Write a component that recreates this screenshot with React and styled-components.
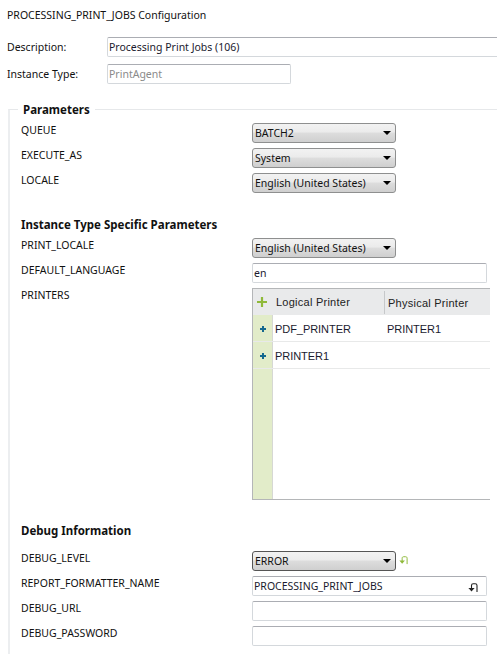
import React from 'react';
import styled, { createGlobalStyle } from 'styled-components';

const GlobalStyle = createGlobalStyle`
  html, body {
    margin: 0;
    padding: 0;
    background: #fff;
  }
`

const Page = styled.div`
  width: 497px;
  height: 654px;
  overflow: hidden;
  background: #fff;
  color: #111;
  font-family: "Noto Sans", "Liberation Sans", sans-serif;
  font-size: 10.5px;
`

const Title = styled.div`
  height: 20px;
  line-height: 20px;
  padding: 5px 0 0 7px;
  margin-bottom: 12px;
`

const TopRow = styled.div`
  display: grid;
  grid-template-columns: 100px ${props => props.$inputWidth}px;
  align-items: center;
  padding-left: 7px;
  height: 20px;
  margin-bottom: 7px;
`

const TextBox = styled.div`
  box-sizing: border-box;
  height: 20px;
  line-height: 18px;
  padding: 0 1px;
  width: ${props => props.$width}px;
  border: 1px solid #d4d8dc;
  border-top-color: #abadb3;
  border-radius: 2px;
  background: #fff;
  color: ${props => props.$muted ? '#8a8a8a' : '#1a1a2e'};
  white-space: nowrap;
  display: flex;
  justify-content: space-between;
  align-items: center;
`

const Fieldset = styled.div`
  position: relative;
  box-sizing: border-box;
  width: 520px;
  height: 600px;
  margin: 25px 0 0 8px;
  padding: 13px 0 0 11px;
  border-top: 1px solid #e6e8ea;
  border-left: 2px solid #eceef0;
`

const Legend = styled.div`
  position: absolute;
  top: -7px;
  left: 8px;
  padding: 0 5px;
  background: #fff;
  line-height: 14px;
  font-size: 11.5px;
  font-weight: 700;
`

const Heading = styled.div`
  height: 14px;
  line-height: 14px;
  font-size: 11.5px;
  font-weight: 700;
  margin-top: ${props => props.$top}px;
  margin-bottom: ${props => props.$bottom}px;
`

const Row = styled.div`
  display: grid;
  grid-template-columns: 231px 1fr;
  margin-bottom: 5px;
  min-height: 20px;
`

const Label = styled.div`
  line-height: 14px;
`

const Control = styled.div`
  display: flex;
  align-items: flex-start;
`

const SelectBox = styled.div`
  box-sizing: border-box;
  width: 144px;
  height: 20px;
  padding: 0 4px 0 2px;
  display: flex;
  justify-content: space-between;
  align-items: center;
  border: 1px solid ${props => props.$focused ? '#555' : '#8e8f8f'};
  border-radius: 3px;
  background: linear-gradient(#f2f2f2 0%, #ebebeb 45%, #dddddd 50%, #cfcfcf 100%);
  color: #111;
`

const Arrow = styled.span`
  width: 0;
  height: 0;
  border-left: 4px solid transparent;
  border-right: 4px solid transparent;
  border-top: 4px solid #000;
`

const GreenRevert = styled.span`
  margin: 5px 0 0 3px;
`

const InnerRevert = styled.span`
  margin-right: 7px;
  margin-top: 3px;
`

const Table = styled.div`
  box-sizing: border-box;
  width: 238px;
  height: 212px;
  display: flex;
  flex-direction: column;
  border: solid #b4b6b8;
  border-width: 1px 0 1px 1px;
  font-family: "Liberation Sans", Arial, sans-serif;
  font-size: 11px;
`

const HeaderRow = styled.div`
  display: grid;
  grid-template-columns: 19px 112px 1fr;
  height: 26px;
  flex: none;
  background: #e9eaeb;
  letter-spacing: 0.25px;
  color: #222;
`

const HeaderCell = styled.div`
  display: flex;
  align-items: center;
  padding-left: ${props => props.$pad}px;
`

const Divider = styled.div`
  display: flex;
  align-items: center;
  border-left: 1px solid #c6c8ca;
  height: 23px;
  padding-left: 3px;
  margin-top: 1px;
  white-space: nowrap;
`

const Body = styled.div`
  flex: 1;
  background: linear-gradient(90deg, #e2ecc9 0, #e2ecc9 19px, #d6d8d4 19px, #d6d8d4 20px, #fff 20px);
`

const DataRow = styled.div`
  display: grid;
  grid-template-columns: 19px 112px 1fr;
  height: 27px;
  padding-top: 1px;
  box-sizing: border-box;
  border-bottom: 1px solid #e8e9e9;
  align-items: center;
  color: #1a1a2e;
  letter-spacing: -0.05px;
`

const ExpandCell = styled.div`
  display: flex;
  justify-content: center;
  padding-left: 1px;
`

const Cell = styled.div`
  padding-left: 3px;
`

const PlusIcon = ({ size, color, weight }) => (
  <svg width={size} height={size} viewBox={`0 0 ${size} ${size}`} style={{ display: 'block' }}>
    <path d={`M0 ${size / 2}H${size}M${size / 2} 0V${size}`} stroke={color} strokeWidth={weight} />
  </svg>
)

const RevertIcon = ({ color, size }) => (
  <svg width={size} height={size} viewBox="0 0 10 10" fill="none" style={{ display: 'block' }}>
    <path d="M3.5 6V2.5C3.5 1.4 4.1 0.8 5.2 0.8H7.2C8.4 0.8 9 1.4 9 2.5V9" stroke={color} strokeWidth="1.1" />
    <path d="M0.4 5H6.6L3.5 8.6Z" fill={color} />
  </svg>
)

const Select = ({ value, focused }) => (
  <SelectBox $focused={focused}>
    <span>{value}</span>
    <Arrow />
  </SelectBox>
)

const Field = ({ label, children }) => (
  <Row>
    <Label>{label}</Label>
    <Control>{children}</Control>
  </Row>
)

const App = () => (
  <Page>
    <GlobalStyle />
    <Title>PROCESSING_PRINT_JOBS Configuration</Title>
    <TopRow $inputWidth={400}>
      <span>Description:</span>
      <TextBox $width={400}>Processing Print Jobs (106)</TextBox>
    </TopRow>
    <TopRow $inputWidth={184}>
      <span>Instance Type:</span>
      <TextBox $width={184} $muted>PrintAgent</TextBox>
    </TopRow>

    <Fieldset>
      <Legend>Parameters</Legend>
      <Field label="QUEUE"><Select value="BATCH2" /></Field>
      <Field label="EXECUTE_AS"><Select value="System" /></Field>
      <Field label="LOCALE"><Select value="English (United States)" /></Field>

      <Heading $top={25} $bottom={6}>Instance Type Specific Parameters</Heading>
      <Field label="PRINT_LOCALE"><Select value="English (United States)" /></Field>
      <Field label="DEFAULT_LANGUAGE"><TextBox $width={235}>en</TextBox></Field>
      <Field label="PRINTERS">
        <Table>
          <HeaderRow>
            <HeaderCell $pad={4}><PlusIcon size={10} color="#8fb93a" weight={2.2} /></HeaderCell>
            <HeaderCell $pad={4}>Logical Printer</HeaderCell>
            <HeaderCell $pad={0}><Divider>Physical Printer</Divider></HeaderCell>
          </HeaderRow>
          <Body>
            <DataRow>
              <ExpandCell><PlusIcon size={6} color="#15688f" weight={2} /></ExpandCell>
              <Cell>PDF_PRINTER</Cell>
              <Cell>PRINTER1</Cell>
            </DataRow>
            <DataRow>
              <ExpandCell><PlusIcon size={6} color="#15688f" weight={2} /></ExpandCell>
              <Cell>PRINTER1</Cell>
              <Cell />
            </DataRow>
          </Body>
        </Table>
      </Field>

      <Heading $top={24} $bottom={13}>Debug Information</Heading>
      <Field label="DEBUG_LEVEL">
        <Select value="ERROR" focused />
        <GreenRevert><RevertIcon color="#8fb93a" size={9} /></GreenRevert>
      </Field>
      <Field label="REPORT_FORMATTER_NAME">
        <TextBox $width={235}>
          PROCESSING_PRINT_JOBS
          <InnerRevert><RevertIcon color="#222" size={10} /></InnerRevert>
        </TextBox>
      </Field>
      <Field label="DEBUG_URL"><TextBox $width={235} /></Field>
      <Field label="DEBUG_PASSWORD"><TextBox $width={235} /></Field>
    </Fieldset>
  </Page>
)

export default App;
